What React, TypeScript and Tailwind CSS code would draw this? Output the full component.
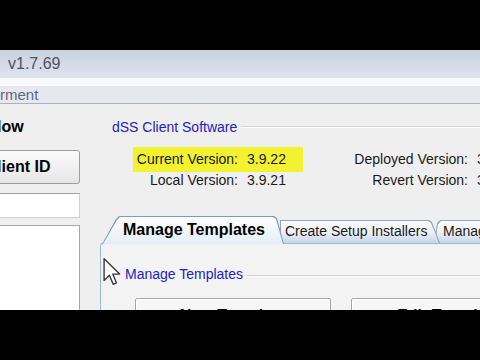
const Cursor = () => (
  <svg
    className="absolute left-[103px] top-[208px] z-50"
    width="19"
    height="28"
    viewBox="0 0 13 20"
  >
    <path
      d="M0.5 0.5 L0.5 16 L4.3 12.3 L7 18.8 L9.3 17.8 L6.7 11.5 L11.6 11.5 Z"
      fill="#ffffff"
      stroke="#3a3a3a"
      strokeWidth="1"
      strokeLinejoin="round"
    />
  </svg>
);

const LeftColumn = () => (
  <div className="w-[80px] shrink-0 overflow-hidden">
    <div className="w-[124px] -ml-[44px] flex flex-col">
      <div className="mt-[13px] -ml-[4px] text-[16px] font-bold leading-[20px] text-black whitespace-nowrap">
        Workflow
      </div>
      <div className="mt-[13px] h-[34px] flex items-center justify-center rounded-[3px] border border-[#9d9d9d] bg-gradient-to-b from-[#fbfbfb] to-[#e6e6e6] text-[16px] font-bold text-black whitespace-nowrap">
        Client ID
      </div>
      <div className="mt-[9px] h-[25px] bg-white border border-[#cfcfcf] border-t-[#a2a2a2]" />
      <div className="mt-[7px] h-[100px] bg-white border border-[#a8a8a8]" />
    </div>
  </div>
);

const VersionInfo = () => (
  <div className="flex flex-col">
    <div className="mt-[14px] flex items-center h-[18px]">
      <span className="ml-[12px] text-[#2222be] leading-[18px] whitespace-nowrap">dSS Client Software</span>
      <div className="ml-[4px] flex-1 h-[2px] border-t border-[#d2d2d2] border-b border-b-white" />
    </div>
    <div className="mt-[11px] flex items-center h-[25px] whitespace-nowrap">
      <div className="ml-[33px] w-[170px] h-full shrink-0 flex items-center bg-[#f2f230]">
        <span className="w-[105px] shrink-0 text-right">Current Version:</span>
        <span className="ml-[9px]">3.9.22</span>
      </div>
      <span className="w-[165px] shrink-0 text-right">Deployed Version:</span>
      <span className="ml-[9px] shrink-0">3.9.22</span>
    </div>
    <div className="flex items-center h-[17px] whitespace-nowrap">
      <div className="ml-[33px] w-[170px] shrink-0 flex items-center">
        <span className="w-[105px] shrink-0 text-right">Local Version:</span>
        <span className="ml-[9px]">3.9.21</span>
      </div>
      <span className="w-[165px] shrink-0 text-right">Revert Version:</span>
      <span className="ml-[9px] shrink-0">3.9.20</span>
    </div>
  </div>
);

const Tabs = () => (
  <div className="mt-[27px] flex items-end h-[27px] whitespace-nowrap">
    <div className="relative z-30 ml-[2px] -mb-[1px] w-[182px] h-[28px] shrink-0 bg-[#7f9bbb] [clip-path:polygon(0_100%,14px_3px,17px_0,calc(100%_-_10px)_0,calc(100%_-_7px)_2px,100%_100%)]">
      <div className="absolute inset-x-[1px] top-[1px] bottom-0 bg-gradient-to-b from-white to-[#e4edf8] [clip-path:polygon(0_100%,14px_3px,17px_0,calc(100%_-_10px)_0,calc(100%_-_7px)_2px,100%_100%)]" />
      <span className="relative pl-[21px] text-[16px] font-bold leading-[28px] text-black">Manage Templates</span>
    </div>
    <div className="relative z-20 -ml-[4px] w-[160px] h-[23px] shrink-0 bg-[#8fa6c2] [clip-path:polygon(0_100%,0_0,calc(100%_-_11px)_0,calc(100%_-_8px)_2px,100%_100%)]">
      <div className="absolute inset-x-[1px] top-[1px] bottom-0 bg-gradient-to-b from-[#fbfbfb] via-[#eef2f7] to-[#c5d5e9] [clip-path:polygon(0_100%,0_0,calc(100%_-_11px)_0,calc(100%_-_8px)_2px,100%_100%)]" />
      <span className="relative pl-[5px] leading-[23px] text-[#1a1a1a]">Create Setup Installers</span>
    </div>
    <div className="relative z-10 -ml-[6px] w-[120px] h-[23px] shrink-0 bg-[#8fa6c2] [clip-path:polygon(0_100%,3px_3px,6px_0,100%_0,100%_100%)]">
      <div className="absolute inset-x-[1px] top-[1px] bottom-0 bg-gradient-to-b from-[#fbfbfb] via-[#eef2f7] to-[#c5d5e9] [clip-path:polygon(0_100%,3px_3px,6px_0,100%_0,100%_100%)]" />
      <span className="relative pl-[9px] leading-[23px] text-[#1a1a1a]">Manage Clients</span>
    </div>
  </div>
);

const TabPanel = () => (
  <div className="flex-1 flex flex-col pl-[24px] border-l border-t border-[#9db7d6] rounded-tl-[3px] bg-[#f3f3f3]">
    <div className="mt-[21px] flex items-center h-[18px]">
      <span className="text-[#2222be] leading-[18px] whitespace-nowrap">Manage Templates</span>
      <div className="ml-[4px] mt-[3px] flex-1 h-[2px] border-t border-[#d2d2d2] border-b border-b-white" />
    </div>
    <div className="mt-[15px] flex whitespace-nowrap">
      <div className="ml-[10px] w-[196px] h-[40px] shrink-0 rounded-[2px] border border-[#a6a6a6] bg-[#f7f7f7] pt-[7px] text-center text-[16px] font-bold leading-[20px] text-black shadow-[inset_1px_1px_0_#ffffff]">
        New Template
      </div>
      <div className="ml-[20px] w-[196px] h-[40px] shrink-0 rounded-[2px] border border-[#a6a6a6] bg-[#f7f7f7] pt-[7px] text-center text-[16px] font-bold leading-[20px] text-black shadow-[inset_1px_1px_0_#ffffff]">
        Edit Template
      </div>
    </div>
  </div>
);

export default function App() {
  return (
    <div className="w-[480px] h-[360px] bg-black flex flex-col overflow-hidden font-['Liberation_Sans',Arial,sans-serif] text-[14px] text-[#1a1a1a]">
      <div className="h-[50px] shrink-0" />
      <div className="relative h-[260px] shrink-0 overflow-hidden bg-[#efefef] flex flex-col">
        <div className="h-[28px] shrink-0 bg-gradient-to-b from-[#c8d1df] to-[#dee4ee] pl-[8px] text-[16px] leading-[28px] text-[#4a5264]">
          v1.7.69
        </div>
        <div className="h-[8px] shrink-0 bg-[#f8f9fc]" />
        <div className="h-[18px] shrink-0 bg-[#e5e8ef] border-b border-[#aab2c2] text-[15px] leading-[17px] text-[#5f6779]">
          rment
        </div>
        <div className="flex flex-1 min-h-0">
          <LeftColumn />
          <div className="flex-1 min-w-0 flex flex-col pl-[20px] overflow-hidden">
            <VersionInfo />
            <Tabs />
            <TabPanel />
          </div>
        </div>
        <Cursor />
      </div>
      <div className="flex-1" />
    </div>
  );
}
